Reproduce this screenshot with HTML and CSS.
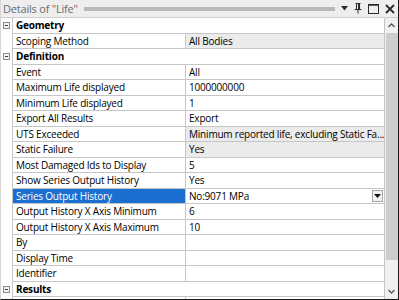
FILE: index.html
```html
<!DOCTYPE html>
<html lang="en">
<head>
    <meta charset="UTF-8">
    <title>Details of "Life"</title>
    <link rel="stylesheet" href="styles.css">
</head>
<body>
    <div class="panel">
        <div class="titlebar">
            <span class="title">Details of "Life"</span>
            <span class="grip"></span>
            <span class="tools">
                <svg width="7" height="5" viewBox="0 0 7 5"><path d="M0 0h7L3.5 4.5z" fill="#2b2b2b"/></svg>
                <svg width="8" height="11" viewBox="0 0 8 11"><path d="M1.5 0.5h5M2.5 0.5v6M5.5 0.5v6M4.5 1v5.5M0.5 6.5h7M4 6.5v4" stroke="#2b2b2b" fill="none"/></svg>
                <svg width="11" height="11" viewBox="0 0 11 11"><rect x="0.5" y="1.5" width="10" height="9" stroke="#2b2b2b" stroke-width="1" fill="none"/><path d="M0.5 2h10" stroke="#2b2b2b" stroke-width="1.5"/></svg>
                <svg width="10" height="10" viewBox="0 0 10 10"><path d="M1 1l8 8M9 1l-8 8" stroke="#2b2b2b" stroke-width="1.8"/></svg>
            </span>
        </div>
        <div class="body">
            <div class="grid">
                <div class="row group"><span class="exp"><i class="box"></i></span><span class="head">Geometry</span></div>
                <div class="row"><span class="exp"></span><span class="label">Scoping Method</span><span class="value ro">All Bodies</span></div>
                <div class="row group"><span class="exp"><i class="box"></i></span><span class="head">Definition</span></div>
                <div class="row"><span class="exp"></span><span class="label">Event</span><span class="value">All</span></div>
                <div class="row"><span class="exp"></span><span class="label">Maximum Life displayed</span><span class="value">1000000000</span></div>
                <div class="row"><span class="exp"></span><span class="label">Minimum Life displayed</span><span class="value">1</span></div>
                <div class="row"><span class="exp"></span><span class="label">Export All Results</span><span class="value">Export</span></div>
                <div class="row"><span class="exp"></span><span class="label">UTS Exceeded</span><span class="value ro">Minimum reported life, excluding Static Fa...</span></div>
                <div class="row"><span class="exp"></span><span class="label">Static Failure</span><span class="value ro">Yes</span></div>
                <div class="row"><span class="exp"></span><span class="label">Most Damaged Ids to Display</span><span class="value">5</span></div>
                <div class="row"><span class="exp"></span><span class="label">Show Series Output History</span><span class="value">Yes</span></div>
                <div class="row"><span class="exp"></span><span class="label selected">Series Output History</span><span class="value combo">No:9071 MPa<i class="drop"><svg width="7" height="4" viewBox="0 0 7 4"><path d="M0 0h7L3.5 4z" fill="#111"/></svg></i></span></div>
                <div class="row"><span class="exp"></span><span class="label">Output History X Axis Minimum</span><span class="value">6</span></div>
                <div class="row"><span class="exp"></span><span class="label">Output History X Axis Maximum</span><span class="value">10</span></div>
                <div class="row"><span class="exp"></span><span class="label">By</span><span class="value"></span></div>
                <div class="row"><span class="exp"></span><span class="label">Display Time</span><span class="value"></span></div>
                <div class="row"><span class="exp"></span><span class="label">Identifier</span><span class="value"></span></div>
                <div class="row group"><span class="exp"><i class="box"></i></span><span class="head">Results</span></div>
                <div class="row"><span class="exp"></span><span class="label"></span><span class="value"></span></div>
            </div>
            <div class="scrollbar">
                <svg class="arrow" width="7" height="5" viewBox="0 0 7 5"><path d="M0.5 4L3.5 1L6.5 4" stroke="#555" stroke-width="1.3" fill="none"/></svg>
                <span class="thumb"></span>
                <span class="track"></span>
                <svg class="arrow" width="7" height="5" viewBox="0 0 7 5"><path d="M0.5 1L3.5 4L6.5 1" stroke="#555" stroke-width="1.3" fill="none"/></svg>
            </div>
        </div>
    </div>
</body>
</html>
```

FILE: styles.css
```css
body {
    margin: 0;
    font-family: "Open Sans", "Noto Sans", sans-serif;
    font-size: 10px;
    letter-spacing: -0.2px;
    color: #000;
    background: #fff;
}
.panel {
    width: 399px;
    height: 300px;
    box-sizing: border-box;
    border-right: 1px solid #1a1a1a;
    border-bottom: 1px solid #1a1a1a;
    border-left: 1px solid #d6d6d6;
    display: flex;
    flex-direction: column;
    overflow: hidden;
    background: #eeeeee;
}
.titlebar {
    height: 17px;
    flex: none;
    display: flex;
    align-items: center;
    padding-left: 2px;
    background: #eeeeee;
}
.title {
    color: #6b6b6b;
    font-size: 11px;
    letter-spacing: -0.2px;
}
.grip {
    flex: 1;
    height: 4px;
    margin: 0 6px 0 6px;
    background-image: radial-gradient(circle, #b4b4b4 0.7px, transparent 0.8px);
    background-size: 2px 2px;
}
.tools {
    display: flex;
    align-items: center;
    gap: 6px;
    padding-right: 3px;
}
.body {
    flex: 1;
    display: flex;
    border-top: 1px solid #cfcfcf;
    min-height: 0;
}
.grid {
    width: 384px;
    flex: none;
    background: #fff;
    border-right: 1px solid #c4c4c4;
    box-sizing: border-box;
}
.row {
    display: flex;
    height: 15.5px;
    box-sizing: border-box;
    border-bottom: 1px solid #c6c6c6;
    line-height: 14px;
}
.exp {
    width: 11px;
    flex: none;
    border-right: 1px solid #c6c6c6;
    display: flex;
    align-items: center;
    justify-content: center;
    margin-bottom: -1px;
    background: #fff;
}
.box {
    width: 7px;
    height: 7px;
    box-sizing: border-box;
    border: 1px solid #8c8c8c;
    background: linear-gradient(#3a3a3a, #3a3a3a) center / 3px 1px no-repeat, #f4f4f4;
}
.head {
    flex: 1;
    font-weight: bold;
    padding-left: 3px;
}
.label {
    width: 173px;
    flex: none;
    padding-left: 3px;
    box-sizing: border-box;
    border-right: 1px solid #c6c6c6;
    white-space: nowrap;
    overflow: hidden;
}
.selected {
    background: #1a6fd0;
    color: #fff;
}
.value {
    flex: 1;
    padding-left: 3px;
    white-space: nowrap;
    overflow: hidden;
    display: flex;
    align-items: center;
}
.ro {
    background: #ebebeb;
}
.combo {
    justify-content: space-between;
    padding-right: 1px;
}
.drop {
    width: 11px;
    height: 12px;
    box-sizing: border-box;
    border: 1px solid #a8a8a8;
    background: #f2f2f2;
    display: flex;
    align-items: center;
    justify-content: center;
}
.scrollbar {
    flex: 1;
    display: flex;
    flex-direction: column;
    background: #f0f0f0;
    align-items: center;
}
.arrow {
    margin: 5px 0;
    flex: none;
}
.thumb {
    width: 12px;
    height: 227px;
    background: #cdcdcd;
}
.track {
    flex: 1;
}
```
